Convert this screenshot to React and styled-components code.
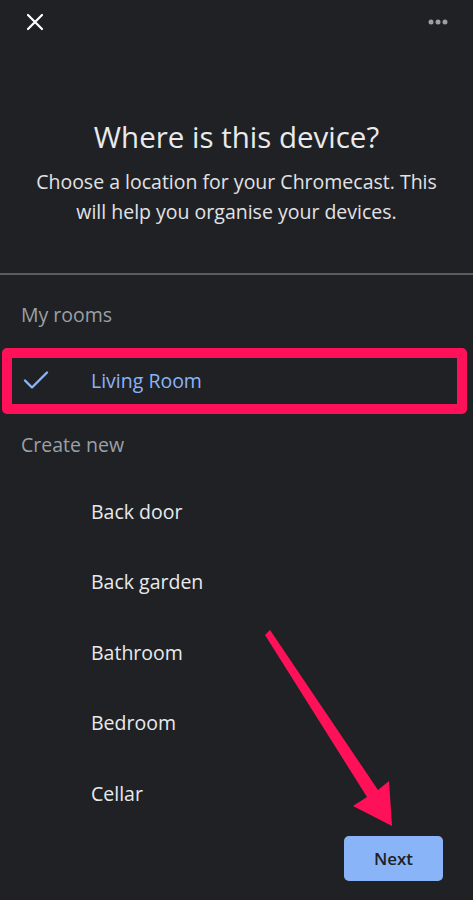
import React from "react";
import styled, { createGlobalStyle } from "styled-components";

const GlobalStyle = createGlobalStyle`
  html, body {
    margin: 0;
    padding: 0;
    background: #202124;
  }
  * {
    box-sizing: border-box;
  }
`;

const Page = styled.div`
  position: relative;
  width: 473px;
  height: 900px;
  overflow: hidden;
  background: #202124;
  color: #e8eaed;
  font-family: "Open Sans", Roboto, "Liberation Sans", sans-serif;
  display: flex;
  flex-direction: column;
`;

const TopBar = styled.div`
  height: 44px;
  display: flex;
  align-items: center;
  justify-content: space-between;
  padding: 0 25px 0 26px;
`;

const IconButton = styled.button`
  background: none;
  border: 0;
  padding: 0;
  display: flex;
  align-items: center;
  justify-content: center;
  cursor: pointer;
`;

const Header = styled.div`
  padding: 74px 10px 46px;
  display: flex;
  flex-direction: column;
  align-items: center;
  text-align: center;
`;

const Title = styled.h1`
  margin: 0;
  font-size: 29.5px;
  line-height: 38px;
  font-weight: 400;
  color: #e8eaed;
`;

const Subtitle = styled.p`
  margin: 11px 0 0;
  font-size: 19.5px;
  line-height: 30px;
  color: #e1e3e6;
`;

const Divider = styled.hr`
  margin: 0;
  border: 0;
  height: 2px;
  background: #5b5c60;
`;

const SectionLabel = styled.div`
  height: ${p => p.$h}px;
  padding: ${p => p.$pt || 0}px 21px 0;
  display: flex;
  align-items: center;
  font-size: 19.5px;
  color: #9aa0a6;
`;

const Row = styled.div`
  position: relative;
  height: ${p => p.$h || 70}px;
  display: flex;
  align-items: center;
  font-size: 19.5px;
  color: ${p => (p.$selected ? "#8ab4f8" : "#e8eaed")};
`;

const CheckSlot = styled.div`
  width: 91px;
  padding-left: 23px;
  display: flex;
  align-items: center;
`;

const Highlight = styled.div`
  position: absolute;
  left: 2px;
  right: 6px;
  top: 1px;
  bottom: -1px;
  border: 10px solid #ff1159;
  border-radius: 5px;
  pointer-events: none;
`;

const Footer = styled.div`
  display: flex;
  justify-content: flex-end;
  padding: 7px 30px 0;
`;

const NextButton = styled.button`
  width: 99px;
  height: 45px;
  border: 0;
  border-radius: 5px;
  background: #8ab4f8;
  color: #202124;
  font-family: inherit;
  font-size: 17px;
  font-weight: 600;
  cursor: pointer;
`;

const ArrowLayer = styled.svg`
  position: absolute;
  left: 0;
  top: 0;
  pointer-events: none;
`;

const rooms = ["Back door", "Back garden", "Bathroom", "Bedroom", "Cellar"];

const CloseIcon = () => (
  <svg width="18" height="18" viewBox="0 0 18 18">
    <path d="M2 2 L16 16 M16 2 L2 16" stroke="#ffffff" strokeWidth="2.2" strokeLinecap="round" />
  </svg>
);

const MoreIcon = () => (
  <svg width="20" height="6" viewBox="0 0 20 6">
    <circle cx="3" cy="3" r="2.5" fill="#9aa0a6" />
    <circle cx="10" cy="3" r="2.5" fill="#9aa0a6" />
    <circle cx="17" cy="3" r="2.5" fill="#9aa0a6" />
  </svg>
);

const CheckIcon = () => (
  <svg width="26" height="20" viewBox="0 0 26 20">
    <path d="M2 10.5 L9 17.5 L24 2.5" stroke="#8ab4f8" strokeWidth="2.4" fill="none" strokeLinecap="round" strokeLinejoin="round" />
  </svg>
);

const App = () => (
  <>
    <GlobalStyle />
    <Page>
      <TopBar>
        <IconButton aria-label="Close">
          <CloseIcon />
        </IconButton>
        <IconButton aria-label="More">
          <MoreIcon />
        </IconButton>
      </TopBar>

      <Header>
        <Title>Where is this device?</Title>
        <Subtitle>
          Choose a location for your Chromecast. This
          <br />
          will help you organise your devices.
        </Subtitle>
      </Header>

      <Divider />

      <SectionLabel $h={72} $pt={6}>My rooms</SectionLabel>
      <Row $h={66} $selected>
        <CheckSlot>
          <CheckIcon />
        </CheckSlot>
        Living Room
        <Highlight />
      </Row>

      <SectionLabel $h={63}>Create new</SectionLabel>
      {rooms.map(room => (
        <Row key={room} $h={70.5}>
          <CheckSlot />
          {room}
        </Row>
      ))}

      <Footer>
        <NextButton>Next</NextButton>
      </Footer>

      <ArrowLayer width="473" height="900" viewBox="0 0 473 900">
        <polygon
          points="265,635 270,630 378,790 389,781 392,826 353,806 367,797"
          fill="#ff1159"
        />
      </ArrowLayer>
    </Page>
  </>
);

export default App;
